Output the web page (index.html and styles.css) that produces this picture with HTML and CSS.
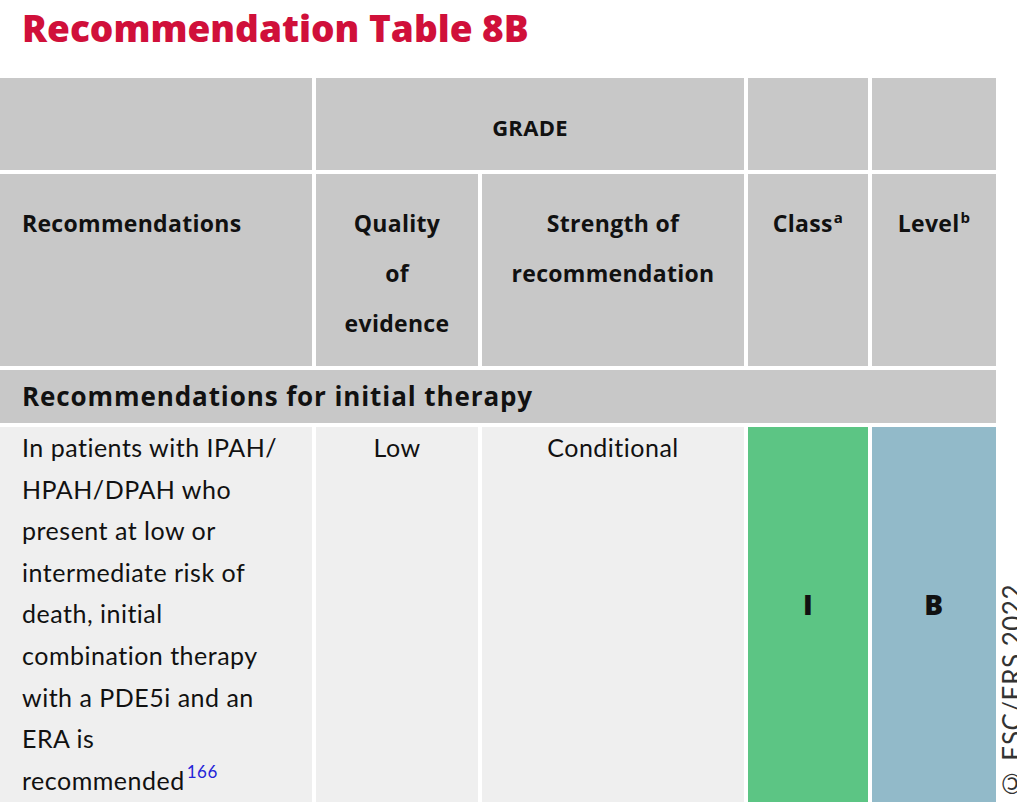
FILE: index.html
```html
<!DOCTYPE html>
<html lang="en">
<head>
<meta charset="utf-8">
<title>Recommendation Table 8B</title>
<link rel="stylesheet" href="styles.css">
</head>
<body>
<h1 class="title">Recommendation Table 8B</h1>
<div class="wrap">
  <div class="table">
    <div class="cell head"></div>
    <div class="cell head grade">GRADE</div>
    <div class="cell head"></div>
    <div class="cell head"></div>

    <div class="cell head sub left">Recommendations</div>
    <div class="cell head sub">Quality<br>of<br>evidence</div>
    <div class="cell head sub">Strength of<br>recommendation</div>
    <div class="cell head sub">Class<sup class="note">a</sup></div>
    <div class="cell head sub">Level<sup class="note">b</sup></div>

    <div class="cell head section">Recommendations for initial therapy</div>

    <div class="cell body left">In patients with IPAH/ HPAH/DPAH who present at low or intermediate risk of death, initial combination therapy with a PDE5i and an ERA is recommended<sup class="ref">166</sup></div>
    <div class="cell body">Low</div>
    <div class="cell body">Conditional</div>
    <div class="cell body mark cls">I</div>
    <div class="cell body mark lvl">B</div>
  </div>
  <div class="copy">© ESC/ERS 2022</div>
</div>
</body>
</html>
```

FILE: styles.css
```css
html, body {
  margin: 0;
  padding: 0;
  background: #ffffff;
  overflow: hidden;
}

body {
  font-family: "Lato", "Open Sans", sans-serif;
  color: #111111;
  width: 1017px;
  height: 812px;
}

.title {
  margin: 7px 0 29px 22px;
  font-family: "Open Sans", "Lato", sans-serif;
  font-size: 37px;
  line-height: 42px;
  font-weight: 800;
  color: #d0103a;
  letter-spacing: 0;
}

.wrap {
  display: flex;
  align-items: flex-end;
}

.table {
  flex: 0 0 996px;
  display: grid;
  grid-template-columns: 312px 162px 262px 120px 124px;
  grid-template-rows: 92px 192px 53px auto;
  gap: 4px;
}

.cell {
  text-align: center;
}

.head {
  background: #c8c8c8;
  font-family: "Open Sans", "Lato", sans-serif;
  font-weight: 700;
  font-size: 23px;
  letter-spacing: 0.3px;
}

.grade {
  grid-column: span 2;
  display: flex;
  align-items: center;
  justify-content: center;
  padding-top: 6px;
  font-size: 22px;
}

.sub {
  padding-top: 24px;
  line-height: 50px;
}

.sub.left {
  text-align: left;
  padding-left: 22px;
}

.note {
  font-size: 15px;
  vertical-align: 9px;
  line-height: 0;
  margin-left: 1px;
}

.section {
  grid-column: 1 / -1;
  text-align: left;
  padding-left: 22px;
  font-size: 26px;
  letter-spacing: 0.9px;
  line-height: 53px;
}

.body {
  background: #efefef;
  font-size: 25px;
  line-height: 41.6px;
  letter-spacing: 0.5px;
  padding-bottom: 1px;
}

.body.left {
  text-align: left;
  padding-left: 22px;
  padding-right: 20px;
}

.ref {
  color: #2424d8;
  font-size: 17px;
  vertical-align: 12px;
  line-height: 0;
  letter-spacing: 0.5px;
  margin-left: 2px;
}

.mark {
  display: flex;
  align-items: center;
  justify-content: center;
  font-family: "Open Sans", "Lato", sans-serif;
  font-weight: 800;
  font-size: 28px;
  padding-bottom: 20px;
}

.cls {
  background: #5cc584;
}

.lvl {
  background: #92bac9;
}

.copy {
  flex: 0 0 auto;
  writing-mode: vertical-rl;
  transform: rotate(180deg);
  font-size: 26px;
  color: #333333;
  margin-left: 0;
  margin-bottom: 2px;
  white-space: nowrap;
  letter-spacing: 0.5px;
}
```
